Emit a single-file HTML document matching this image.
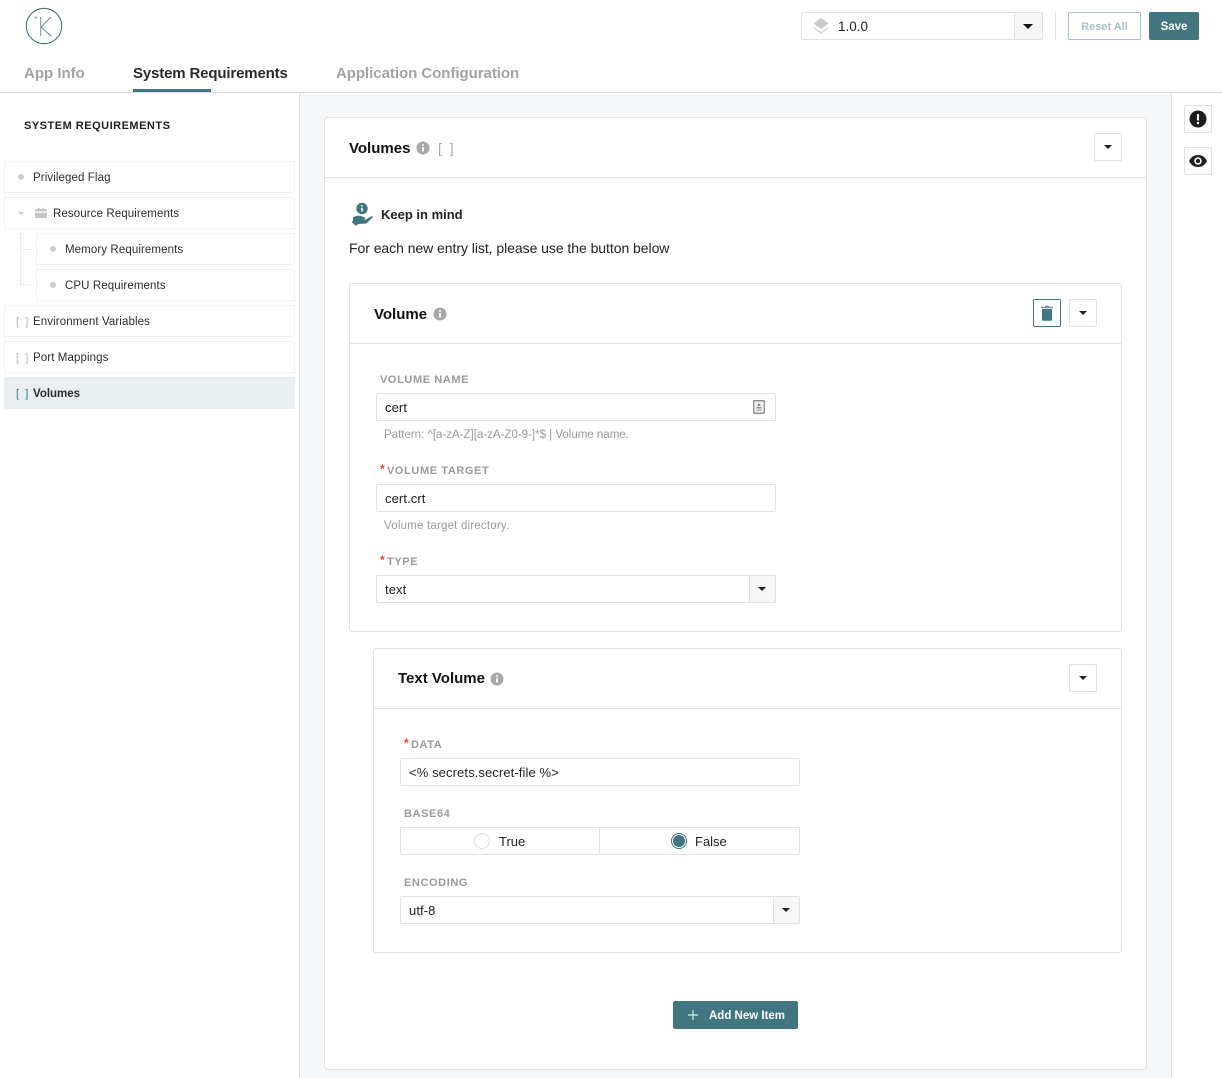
<!DOCTYPE html>
<html><head><meta charset="utf-8"><style>
*{box-sizing:border-box}
html,body{margin:0;padding:0;width:1222px;height:1078px;overflow:hidden;background:#fff;font-family:"Liberation Sans",sans-serif;color:#1e1e1e}
.a{position:absolute}
.t{position:absolute;white-space:nowrap;line-height:16px;margin-top:1px}
.box{position:absolute;background:#fff;border:1px solid #dfe1e2;border-radius:2px}
.side{position:absolute;background:#fff;border:1px solid #f0f1f2;height:32px;right:927px}
.s{font-size:11.5px;color:#2c2c2c;letter-spacing:.1px}
.lab{font-size:11px;font-weight:bold;color:#9a9a9a;letter-spacing:.6px}
.hint{font-size:11.5px;color:#9a9a9a}
.val{font-size:13px;color:#222;letter-spacing:.1px}
.h{font-size:15px;font-weight:bold;color:#111}
.star{color:#e8401c;font-size:12px;font-weight:bold;margin-top:0}
.dot{position:absolute;width:6px;height:6px;border-radius:50%;background:#cdcdcd}
.cb{position:absolute;width:28px;height:28px;background:#fff;border:1px solid #dfe1e2;border-radius:2px}
.cb:after{content:"";position:absolute;left:9px;top:11px;border-left:4px solid transparent;border-right:4px solid transparent;border-top:4px solid #222}
.dd{position:absolute;top:-1px;right:-1px;width:27px;height:28px;background:#f6f6f6;border:1px solid #dfe1e2;border-radius:0 2px 2px 0}
.dd:after{content:"";position:absolute;left:8px;top:11px;border-left:4px solid transparent;border-right:4px solid transparent;border-top:4px solid #222}
.dd.big:after{left:8px;top:11px;border-left-width:5px;border-right-width:5px;border-top-width:5px;border-top-color:#111}
.br{font-size:11px;color:#b5b5b5;letter-spacing:1.6px}
.tab{font-size:15px;font-weight:bold}
</style></head><body>

<svg class="a" style="left:24px;top:7px" width="40" height="38" viewBox="0 0 40 38" fill="none" stroke="#41757f"><circle cx="20" cy="19" r="17.700" stroke-width="1.100"/><path d="M16.700 10v19M27 10l-10 10 10.500 9.500" stroke="#5f8c95" stroke-width=".9"/><circle cx="11.700" cy="10.500" r=".9" fill="#41757f" stroke="none"/></svg>

<div class="t tab" style="left:24px;top:65px;color:#a3a3a3">App Info</div>
<div class="t tab" style="left:133px;top:65px;color:#2b2b2b;letter-spacing:-.15px">System Requirements</div>
<div class="t tab" style="left:336px;top:65px;color:#a3a3a3;letter-spacing:-.04px">Application Configuration</div>
<div class="a" style="left:133px;top:89px;width:78px;height:3px;background:#41757f"></div>
<div class="a" style="left:0;top:92px;width:1222px;height:1px;background:#dcdcdc"></div>

<div class="box" style="left:801px;top:12px;width:242px;height:28px">
 <svg class="a" style="left:10px;top:4px" width="18" height="18" viewBox="0 0 18 18"><path d="M9 1l7.500 5.500L9 12 1.500 6.500z" fill="#c9c9c9"/><path d="M2.500 10.500L9 15l6.500-4.500 1 .9L9 17l-7.500-5.600z" fill="#d6d6d6"/></svg>
 <div class="t val" style="left:36px;top:5px;font-size:13.500px;letter-spacing:0">1.0.0</div>
 <div class="dd big" style="width:29px"></div>
</div>
<div class="a" style="left:1055px;top:12px;width:1px;height:28px;background:#dfe1e2"></div>
<div class="a" style="left:1068px;top:12px;width:73px;height:28px;border:1px solid #a6c2c7;border-radius:2px;background:#fff;color:#a6c2c7;font-size:11px;font-weight:bold;text-align:center;line-height:28px">Reset All</div>
<div class="a" style="left:1149px;top:12px;width:50px;height:28px;border-radius:2px;background:#41757f;color:#fff;font-size:11.500px;font-weight:bold;text-align:center;line-height:30px">Save</div>

<div class="a" style="left:300px;top:93px;width:871px;height:985px;background:#f6f7f8"></div>
<div class="a" style="left:299px;top:93px;width:1px;height:985px;background:#dcdcdc"></div>
<div class="a" style="left:1171px;top:93px;width:1px;height:985px;background:#dcdcdc"></div>

<div class="box" style="left:1184px;top:105px;width:28px;height:28px"><svg class="a" style="left:4px;top:4px" width="18" height="18" viewBox="0 0 18 18"><circle cx="9" cy="9" r="8.500" fill="#1e1e1e"/><rect x="8" y="4" width="2" height="6.500" rx=".6" fill="#fff"/><circle cx="9" cy="13" r="1.200" fill="#fff"/></svg></div>
<div class="box" style="left:1184px;top:147px;width:28px;height:28px"><svg class="a" style="left:4px;top:5px" width="18" height="16" viewBox="0 0 18 16"><path d="M0 8C2 4 5 2 9 2s7 2 9 6c-2 4-5 6-9 6s-7-2-9-6z" fill="#1e1e1e"/><circle cx="9" cy="8" r="3.800" fill="#fff"/><circle cx="9" cy="8" r="2.200" fill="#1e1e1e"/></svg></div>

<div class="t" style="left:24px;top:117px;font-size:11px;font-weight:bold;color:#1e1e1e;letter-spacing:.5px">SYSTEM REQUIREMENTS</div>

<div class="side" style="left:4px;top:161px"></div>
<div class="dot" style="left:18px;top:174px"></div>
<div class="t s" style="left:33px;top:169px">Privileged Flag</div>

<div class="side" style="left:4px;top:197px"></div>
<div class="a" style="left:18px;top:212px;border-left:3.500px solid transparent;border-right:3.500px solid transparent;border-top:3.500px solid #c8c8c8"></div>
<svg class="a" style="left:35px;top:207px" width="12" height="12" viewBox="0 0 12 12"><path d="M0 4.500V3.200C0 2.500.5 2 1.200 2H3V.8h1.300V2h3.400V.8H9V2h1.800c.7 0 1.200.5 1.200 1.200v1.300z" fill="#c4c4c4"/><path d="M0 5.800h12v4c0 .7-.5 1.200-1.200 1.200H1.200C.5 11 0 10.500 0 9.800z" fill="#c4c4c4"/></svg>
<div class="t s" style="left:53px;top:205px">Resource Requirements</div>

<div class="side" style="left:36px;top:233px"></div>
<div class="dot" style="left:50px;top:246px"></div>
<div class="t s" style="left:65px;top:241px">Memory Requirements</div>
<div class="side" style="left:36px;top:269px"></div>
<div class="dot" style="left:50px;top:282px"></div>
<div class="t s" style="left:65px;top:277px">CPU Requirements</div>
<div class="a" style="left:20px;top:233px;width:14px;height:52px;border-left:1px dotted #dcdcdc;border-bottom:1px dotted #dcdcdc"></div>
<div class="a" style="left:21px;top:249px;width:13px;height:1px;border-top:1px dotted #dcdcdc"></div>

<div class="side" style="left:4px;top:305px"></div>
<div class="t br" style="left:16px;top:313px">[ ]</div>
<div class="t s" style="left:33px;top:313px">Environment Variables</div>
<div class="side" style="left:4px;top:341px"></div>
<div class="t br" style="left:16px;top:349px">[ ]</div>
<div class="t s" style="left:33px;top:349px">Port Mappings</div>
<div class="side" style="left:4px;top:377px;background:#e9eef0;border-color:#e9eef0"></div>
<div class="t br" style="left:16px;top:385px;color:#41757f">[ ]</div>
<div class="t s" style="left:33px;top:385px;font-weight:bold;color:#2b2b2b;letter-spacing:0">Volumes</div>

<div class="box" style="left:324px;top:117px;width:823px;height:953px;border-radius:4px"></div>
<div class="a" style="left:325px;top:177px;width:821px;height:1px;background:#dfe1e2"></div>
<div class="t h" style="left:349px;top:140px">Volumes</div>
<svg class="a" style="left:416px;top:141px" width="14" height="14" viewBox="0 0 14 14"><circle cx="7" cy="7" r="6.500" fill="#a8a8a8"/><rect x="6.100" y="6" width="1.800" height="4.500" fill="#fff"/><circle cx="7" cy="4" r="1" fill="#fff"/></svg>
<div class="t" style="left:438px;top:139px;font-size:14px;color:#aaa;letter-spacing:2px">[ ]</div>
<div class="cb" style="left:1094px;top:133px"></div>

<svg class="a" style="left:350px;top:202px" width="23" height="24" viewBox="0 0 23 24"><circle cx="12" cy="6.500" r="5.700" fill="#41757f"/><rect x="11.200" y="5.800" width="1.600" height="3.600" fill="#fff"/><circle cx="12" cy="3.900" r=".9" fill="#fff"/><path d="M3 15L9 13.500L14.500 15.200C15.800 15.700 15.300 17.200 14 17.200L10.500 17.200L16 17.500L21.500 14.300C22.700 13.800 23 15 22.300 15.800L16.500 21.500L8.500 22L5.500 23.800L1.700 20L3 18.500Z" fill="#41757f"/></svg>
<div class="t" style="left:381px;top:206px;font-size:13px;font-weight:bold;color:#222">Keep in mind</div>
<div class="t" style="left:349px;top:239px;font-size:14px;letter-spacing:-.05px;color:#222">For each new entry list, please use the button below</div>

<div class="box" style="left:349px;top:283px;width:773px;height:349px;border-radius:3px"></div>
<div class="a" style="left:350px;top:343px;width:771px;height:1px;background:#dfe1e2"></div>
<div class="t h" style="left:374px;top:306px">Volume</div>
<svg class="a" style="left:433px;top:307px" width="14" height="14" viewBox="0 0 14 14"><circle cx="7" cy="7" r="6.500" fill="#a8a8a8"/><rect x="6.100" y="6" width="1.800" height="4.500" fill="#fff"/><circle cx="7" cy="4" r="1" fill="#fff"/></svg>
<div class="a" style="left:1033px;top:299px;width:28px;height:28px;border:1px solid #41757f;border-radius:2px;background:#fff"><svg class="a" style="left:7px;top:5px" width="12" height="16" viewBox="0 0 12 16"><path d="M0 1.800h4L4.500.5h3L8 1.800h4v1.500H0z" fill="#6d979f"/><path d="M1 4h10V14.800c0 .6-.5 1-1 1H2c-.5 0-1-.4-1-1z" fill="#41757f"/></svg></div>
<div class="cb" style="left:1069px;top:299px"></div>

<div class="t lab" style="left:380px;top:371px">VOLUME NAME</div>
<div class="box" style="left:376px;top:393px;width:400px;height:28px"></div>
<div class="t val" style="left:385px;top:399px">cert</div>
<svg class="a" style="left:753px;top:400px" width="12" height="14" viewBox="0 0 12 14"><rect x=".7" y=".7" width="10.600" height="12.600" rx="1" fill="#eee" stroke="#8c8c8c" stroke-width="1.300"/><path d="M6 3l2 3H4z" fill="#8c8c8c"/><rect x="3.500" y="7" width="5" height="1.500" fill="#8c8c8c"/><rect x="3.500" y="9.500" width="5" height="1.500" fill="#bbb"/></svg>
<div class="t hint" style="left:384px;top:426px">Pattern: ^[a-zA-Z][a-zA-Z0-9-]*$ | Volume name.</div>

<div class="t star" style="left:380px;top:461px">*</div>
<div class="t lab" style="left:387px;top:462px">VOLUME TARGET</div>
<div class="box" style="left:376px;top:484px;width:400px;height:28px"></div>
<div class="t val" style="left:385px;top:490px">cert.crt</div>
<div class="t hint" style="left:384px;top:517px;letter-spacing:.2px">Volume target directory.</div>

<div class="t star" style="left:380px;top:552px">*</div>
<div class="t lab" style="left:387px;top:553px">TYPE</div>
<div class="box" style="left:376px;top:575px;width:400px;height:28px"><div class="dd"></div></div>
<div class="t val" style="left:385px;top:581px">text</div>

<div class="box" style="left:373px;top:648px;width:749px;height:305px;border-radius:3px"></div>
<div class="a" style="left:374px;top:708px;width:747px;height:1px;background:#dfe1e2"></div>
<div class="t h" style="left:398px;top:670px">Text Volume</div>
<svg class="a" style="left:490px;top:672px" width="14" height="14" viewBox="0 0 14 14"><circle cx="7" cy="7" r="6.500" fill="#a8a8a8"/><rect x="6.100" y="6" width="1.800" height="4.500" fill="#fff"/><circle cx="7" cy="4" r="1" fill="#fff"/></svg>
<div class="cb" style="left:1069px;top:664px"></div>

<div class="t star" style="left:404px;top:735px">*</div>
<div class="t lab" style="left:411px;top:736px">DATA</div>
<div class="box" style="left:400px;top:758px;width:400px;height:28px"></div>
<div class="t val" style="left:409px;top:764px">&lt;% secrets.secret-file %&gt;</div>

<div class="t lab" style="left:404px;top:805px">BASE64</div>
<div class="box" style="left:400px;top:827px;width:400px;height:28px"></div>
<div class="a" style="left:599px;top:828px;width:1px;height:26px;background:#dfe1e2"></div>
<div class="a" style="left:474px;top:833px;width:16px;height:16px;border-radius:50%;border:1px solid #dcdcdc;background:#fff"></div>
<div class="t val" style="left:499px;top:833px;letter-spacing:0">True</div>
<div class="a" style="left:671px;top:833px;width:16px;height:16px;border-radius:50%;border:1px solid #41757f;background:#fff"></div>
<div class="a" style="left:673px;top:835px;width:12px;height:12px;border-radius:50%;background:#41757f"></div>
<div class="t val" style="left:695px;top:833px;letter-spacing:0">False</div>

<div class="t lab" style="left:404px;top:874px">ENCODING</div>
<div class="box" style="left:400px;top:896px;width:400px;height:28px"><div class="dd"></div></div>
<div class="t val" style="left:409px;top:902px">utf-8</div>

<div class="a" style="left:673px;top:1001px;width:125px;height:28px;border-radius:2px;background:#41757f"></div>
<svg class="a" style="left:688px;top:1010px" width="10" height="10" viewBox="0 0 10 10"><path d="M5 0v10M0 5h10" stroke="#dbe7e9" stroke-width="1.200"/></svg>
<div class="t" style="left:709px;top:1007px;font-size:11.500px;font-weight:bold;color:#fff">Add New Item</div>

</body></html>
